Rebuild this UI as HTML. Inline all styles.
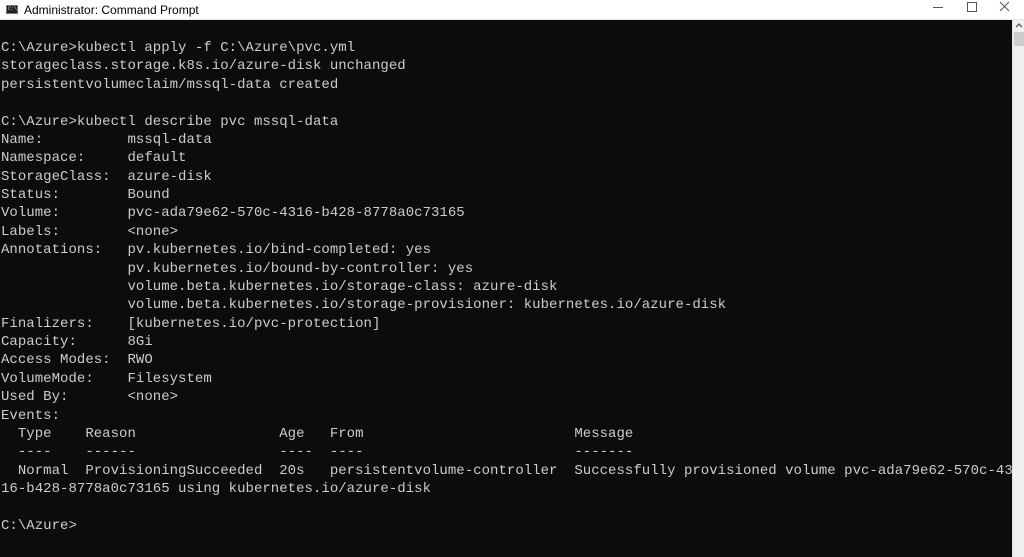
<!DOCTYPE html>
<html><head><meta charset="utf-8"><style>
html,body{margin:0;padding:0;width:1024px;height:557px;overflow:hidden;background:#0c0c0c}
#title{position:absolute;left:0;top:0;width:1024px;height:20px;background:#fff;border-bottom:1px solid #e8e8e8;box-sizing:border-box}
#title .t{position:absolute;left:24px;top:3px;font:12px "Liberation Sans",sans-serif;color:#000}
#icon{position:absolute;left:6px;top:5px;width:12px;height:9px;background:#222;border:1px solid #777;box-sizing:border-box}
#icon span{position:absolute;left:1px;top:0px;font:5px "Liberation Mono",monospace;color:#ddd}
.btn{position:absolute;top:0;width:46px;height:20px}
#sb{position:absolute;left:1012px;top:20px;width:12px;height:537px;background:#f0f0f0;border-left:1px solid #e0e0e0;box-sizing:border-box}
#thumb{position:absolute;left:1px;top:12px;width:10px;height:14px;background:#cdcdcd}
pre{position:absolute;left:1px;top:39px;margin:0;font:14px/18.38px "Liberation Mono",monospace;color:#cccccc;letter-spacing:0.03px}
</style></head><body>
<div id="title"><div id="icon"><span>C:\</span></div><div class="t">Administrator: Command Prompt</div>
<svg class="btn" style="left:916px" width="46" height="20"><line x1="17" y1="7.5" x2="27" y2="7.5" stroke="#555"/></svg>
<svg class="btn" style="left:949px" width="46" height="20"><rect x="18.5" y="2.5" width="9" height="9" fill="none" stroke="#555"/></svg>
<svg class="btn" style="left:982px" width="46" height="20"><path d="M18 2L27 11M27 2L18 11" stroke="#555"/></svg>
</div>
<div id="sb"><svg width="12" height="12" style="position:absolute;left:0;top:0"><path d="M3 7L6 4L9 7" stroke="#555" fill="none" stroke-width="1.3"/></svg><div id="thumb"></div></div>
<pre>C:\Azure>kubectl apply -f C:\Azure\pvc.yml
storageclass.storage.k8s.io/azure-disk unchanged
persistentvolumeclaim/mssql-data created

C:\Azure>kubectl describe pvc mssql-data
Name:          mssql-data
Namespace:     default
StorageClass:  azure-disk
Status:        Bound
Volume:        pvc-ada79e62-570c-4316-b428-8778a0c73165
Labels:        &lt;none&gt;
Annotations:   pv.kubernetes.io/bind-completed: yes
               pv.kubernetes.io/bound-by-controller: yes
               volume.beta.kubernetes.io/storage-class: azure-disk
               volume.beta.kubernetes.io/storage-provisioner: kubernetes.io/azure-disk
Finalizers:    [kubernetes.io/pvc-protection]
Capacity:      8Gi
Access Modes:  RWO
VolumeMode:    Filesystem
Used By:       &lt;none&gt;
Events:
  Type    Reason                 Age   From                         Message
  ----    ------                 ----  ----                         -------
  Normal  ProvisioningSucceeded  20s   persistentvolume-controller  Successfully provisioned volume pvc-ada79e62-570c-43
16-b428-8778a0c73165 using kubernetes.io/azure-disk

C:\Azure></pre>
</body></html>
